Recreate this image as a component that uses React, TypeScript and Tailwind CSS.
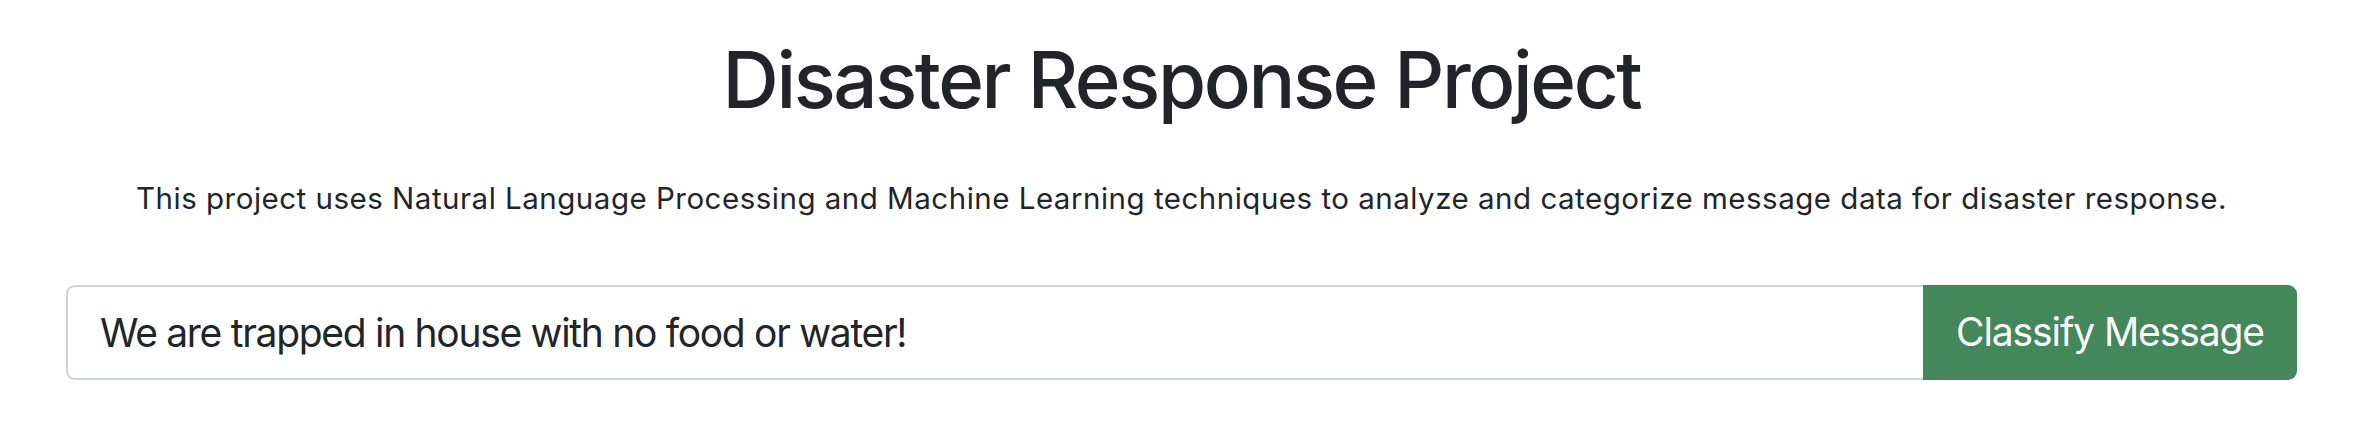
import { useState } from 'react';

// Disaster response landing: title, short blurb and a classify form
export default function App() {
  const [message, setMessage] = useState('We are trapped in house with no food or water!');

  return (
    <div className="min-h-[448px] bg-white text-[#212529]" style={{ fontFamily: 'Inter, "Noto Sans", sans-serif' }}>
      <div className="pl-[66px] pr-[75px] pt-[33px]">
        <h1 className="text-center text-[78px] font-medium leading-[1.2] tracking-[-2.4px]">
          Disaster Response Project
        </h1>
        <p className="mt-[49px] text-center text-[29.5px] leading-[1.5] tracking-[0.5px]">
          This project uses Natural Language Processing and Machine Learning techniques to analyze and categorize message data for disaster response.
        </p>
        <form className="mt-[65px] flex h-[95px]" onSubmit={(e) => e.preventDefault()}>
          <input
            type="text"
            value={message}
            onChange={(e) => setMessage(e.target.value)}
            className="h-full flex-1 rounded-l-[9px] border-2 border-r-0 border-[#ced4da] bg-white px-[32px] text-[39px] tracking-[-1.3px] text-[#212529] outline-none"
          />
          <button
            type="submit"
            className="h-full w-[374px] rounded-r-[9px] bg-[#43875a] text-[39px] tracking-[-1.1px] text-white"
          >
            Classify Message
          </button>
        </form>
      </div>
    </div>
  );
}
